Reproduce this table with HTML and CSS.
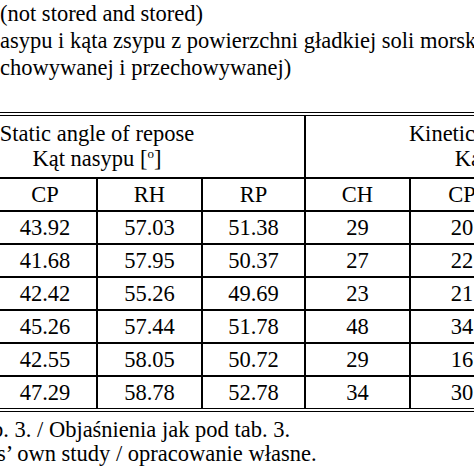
FILE: index.html
```html
<!DOCTYPE html>
<html lang="pl">
<head>
<meta charset="utf-8">
<title>Angle of repose table</title>
<link rel="stylesheet" href="styles.css">
</head>
<body>
<div class="page">
  <div class="caption">
    <div class="cap-line">(not stored and stored)</div>
    <div class="cap-line">asypu i kąta zsypu z powierzchni gładkiej soli morskiej</div>
    <div class="cap-line">chowywanej i przechowywanej)</div>
  </div>

  <table class="data">
    <colgroup>
      <col class="w104"><col class="w104"><col class="w105"><col class="w103">
      <col class="w105"><col class="w104"><col class="w104"><col class="w104">
    </colgroup>
    <thead>
      <tr class="group-row">
        <th colspan="4">Static angle of repose<br>Kąt nasypu [<span class="deg">o</span>]</th>
        <th colspan="4">Kinetic angle of repose<br>Kąt zsypu [<span class="deg">o</span>]</th>
      </tr>
      <tr class="sub-row">
        <th>CH</th><th>CP</th><th>RH</th><th>RP</th>
        <th>CH</th><th>CP</th><th>RH</th><th>RP</th>
      </tr>
    </thead>
    <tbody>
      <tr><td>47.85</td><td>43.92</td><td>57.03</td><td>51.38</td><td>29</td><td>20</td><td>41</td><td>36</td></tr>
      <tr><td>46.12</td><td>41.68</td><td>57.95</td><td>50.37</td><td>27</td><td>22</td><td>39</td><td>33</td></tr>
      <tr><td>45.73</td><td>42.42</td><td>55.26</td><td>49.69</td><td>23</td><td>21</td><td>37</td><td>31</td></tr>
      <tr><td>49.31</td><td>45.26</td><td>57.44</td><td>51.78</td><td>48</td><td>34</td><td>44</td><td>38</td></tr>
      <tr><td>46.90</td><td>42.55</td><td>58.05</td><td>50.72</td><td>29</td><td>16</td><td>40</td><td>35</td></tr>
      <tr class="last"><td>50.14</td><td>47.29</td><td>58.78</td><td>52.78</td><td>34</td><td>30</td><td>45</td><td>39</td></tr>
    </tbody>
  </table>

  <div class="notes">
    <div class="note-line note-a">b. 3. / Objaśnienia jak pod tab. 3.</div>
    <div class="note-line note-b">s’ own study / opracowanie własne.</div>
  </div>
</div>
</body>
</html>
```

FILE: styles.css
```css
html, body {
  margin: 0;
  padding: 0;
  background: #ffffff;
}

body {
  width: 474px;
  height: 474px;
  overflow: hidden;
  font-family: "Liberation Serif", "Times New Roman", serif;
  font-size: 22.5px;
  color: #000000;
}

.page {
  width: 474px;
  overflow: hidden;
}

.caption {
  line-height: 27px;
}

.cap-line {
  white-space: nowrap;
}

.data {
  margin-top: 31px;
  margin-left: -112px;
  border-collapse: collapse;
  table-layout: fixed;
  width: 833px;
}

.w104 { width: 104px; }
.w105 { width: 105px; }
.w103 { width: 103px; }

.data th,
.data td {
  border: 2px solid #000000;
  padding: 0;
  text-align: center;
  font-weight: normal;
  white-space: nowrap;
}

.group-row th {
  border-top: 4px double #000000;
  line-height: 25px;
  padding: 5px 0 6px;
}

.sub-row th,
.data td {
  line-height: 31px;
}

.data tr.last td {
  border-bottom: 4px double #000000;
}

.deg {
  font-size: 13px;
  vertical-align: 8px;
  line-height: 0;
}

.notes {
  margin-top: 6px;
  line-height: 24px;
}

.note-line {
  white-space: nowrap;
}

.note-a {
  text-indent: -8px;
}

.note-b {
  text-indent: -3px;
}
```
